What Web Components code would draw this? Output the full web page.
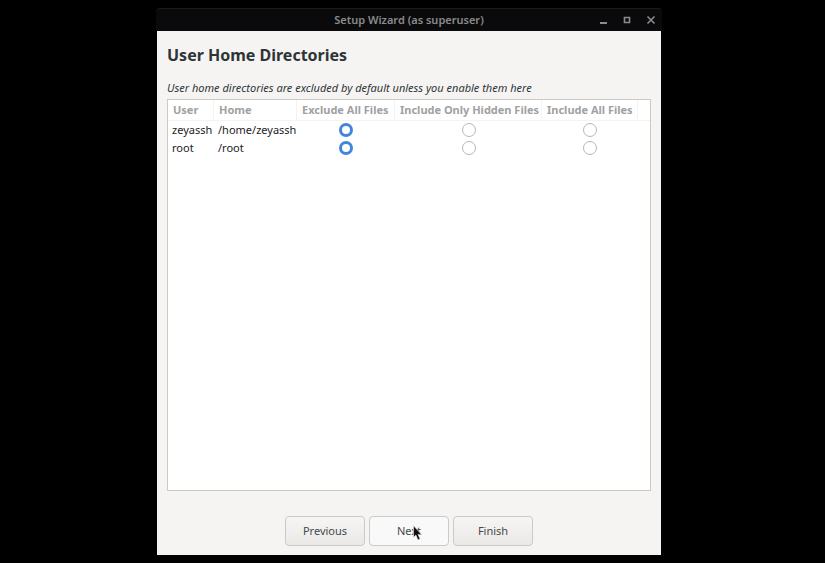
<!DOCTYPE html>
<html lang="en">
  <head>
    <meta charset="UTF-8" />
    <title>Setup Wizard (as superuser)</title>
    <meta name="viewport" content="width=device-width, initial-scale=1.0" />
    <style>
      html {
        height: 100%;
        background: #000;
      }
      body {
        box-sizing: border-box;
        min-height: 100%;
        margin: 0;
        padding: 8px 163px 8px 156px;
        display: flex;
        font-family: "Noto Sans", "Open Sans", sans-serif;
        font-size: 11px;
        line-height: 18px;
        color: #2e3436;
      }
      wizard-window {
        flex: 1;
      }
    </style>
  </head>

  <body>
    <wizard-window caption="Setup Wizard (as superuser)">
      <wizard-page heading="User Home Directories">
        <span slot="hint">User home directories are excluded by default unless you enable them here</span>
        <home-table></home-table>
      </wizard-page>
      <wizard-button slot="actions">Previous</wizard-button>
      <wizard-button slot="actions" hot>Next<mouse-pointer slot="pointer"></mouse-pointer></wizard-button>
      <wizard-button slot="actions">Finish</wizard-button>
    </wizard-window>

    <script>
      class WizardWindow extends HTMLElement {
        constructor() {
          super();

          const root = this.attachShadow({ mode: 'open' });
          root.innerHTML = `
            <style>
              :host {
                display: flex;
                flex-direction: column;
              }
              header {
                display: grid;
                grid-template-columns: 1fr auto 1fr;
                align-items: center;
                height: 22px;
                padding: 0 3px;
                background: #0a0a0c;
                border-top: 1px solid #1b1b1b;
                border-radius: 4px 4px 0 0;
                color: #8b8b8b;
              }
              h1 {
                grid-column: 2;
                margin: 0;
                font-size: 11px;
                font-weight: 600;
              }
              nav {
                display: flex;
                justify-content: flex-end;
                gap: 8px;
              }
              nav button {
                display: flex;
                padding: 0;
                border: 0;
                background: none;
                color: inherit;
              }
              main {
                flex: 1;
                display: flex;
                flex-direction: column;
                margin: 0 1px;
                padding: 12px 10px 9px;
                background: #f5f4f3;
              }
              ::slotted(wizard-page) {
                flex: 1;
              }
              footer {
                display: flex;
                justify-content: center;
                gap: 4px;
                padding-top: 25px;
              }
            </style>
            <header>
              <h1></h1>
              <nav>
                <button type="button" aria-label="Minimize">
                  <svg width="16" height="16"><path d="M5 11h7" stroke="currentColor" stroke-width="2"/></svg>
                </button>
                <button type="button" aria-label="Maximize">
                  <svg width="16" height="16"><path d="M5.5 5.5h5v5h-5z" fill="none" stroke="currentColor" stroke-width="1.6"/></svg>
                </button>
                <button type="button" aria-label="Close">
                  <svg width="16" height="16"><path d="M4.5 4.5l7 7M11.5 4.5l-7 7" stroke="currentColor" stroke-width="1.6"/></svg>
                </button>
              </nav>
            </header>
            <main>
              <slot></slot>
              <footer><slot name="actions"></slot></footer>
            </main>
          `
          root.querySelector('h1').textContent = this.getAttribute('caption');
        }
      }

      window.customElements.define('wizard-window', WizardWindow);

      class WizardPage extends HTMLElement {
        constructor() {
          super();

          const root = this.attachShadow({ mode: 'open' });
          root.innerHTML = `
            <style>
              :host {
                display: flex;
                flex-direction: column;
              }
              h2 {
                margin: 0;
                font-size: 16px;
                line-height: 24px;
              }
              p {
                margin: 12px 0 2px;
                font-style: italic;
              }
              ::slotted(home-table) {
                flex: 1;
              }
            </style>
            <h2></h2>
            <p><slot name="hint"></slot></p>
            <slot></slot>
          `
          root.querySelector('h2').textContent = this.getAttribute('heading');
        }
      }

      window.customElements.define('wizard-page', WizardPage);

      class HomeTable extends HTMLElement {
        constructor() {
          super();

          const users = [
            { name: 'zeyassh', home: '/home/zeyassh' },
            { name: 'root', home: '/root' }
          ];
          const modes = ['Exclude All Files', 'Include Only Hidden Files', 'Include All Files'];

          const getRow = (user) => `
            <tr>
              <td>${user.name}</td>
              <td>${user.home}</td>
              ${modes.map((mode, i) => `
                <td class="mode"><input type="radio" name="mode-${user.name}" aria-label="${user.name}: ${mode}" ${i === 0 ? 'checked' : ''} /></td>
              `).join('')}
              <td></td>
            </tr>
          `

          const root = this.attachShadow({ mode: 'open' });
          root.innerHTML = `
            <style>
              :host {
                display: block;
                border: 1px solid #cdc9c5;
                background: #fff;
                color: #1c1c1c;
              }
              table {
                width: 100%;
                table-layout: fixed;
                border-collapse: separate;
                border-spacing: 0;
                white-space: nowrap;
              }
              .user { width: 46px; }
              .home { width: 83px; }
              .exclude { width: 98px; }
              .hidden { width: 147px; }
              .all { width: 96px; }
              th {
                height: 21px;
                padding: 0 0 0 5px;
                box-sizing: border-box;
                border-right: 1px solid #f3f3f2;
                border-bottom: 1px solid #f3f3f2;
                line-height: 18px;
                text-align: left;
                color: #a0a1a1;
              }
              th:last-child {
                border-right: 0;
              }
              td {
                height: 18px;
                padding: 0 0 0 4px;
              }
              .mode {
                padding: 0;
                text-align: center;
                line-height: 0;
              }
              input {
                appearance: none;
                box-sizing: border-box;
                width: 14px;
                height: 14px;
                margin: 0;
                border: 1px solid #b9b6b2;
                border-radius: 50%;
                background: #fff;
                vertical-align: middle;
              }
              input:checked {
                border: 3px solid #4485dc;
              }
            </style>
            <table>
              <colgroup>
                <col class="user" /><col class="home" /><col class="exclude" /><col class="hidden" /><col class="all" /><col />
              </colgroup>
              <thead>
                <tr>
                  <th>User</th>
                  <th>Home</th>
                  ${modes.map((mode) => `<th>${mode}</th>`).join('')}
                  <th></th>
                </tr>
              </thead>
              <tbody>${users.map(getRow).join('')}</tbody>
            </table>
          `
        }
      }

      window.customElements.define('home-table', HomeTable);

      class WizardButton extends HTMLElement {
        constructor() {
          super();

          const root = this.attachShadow({ mode: 'open' });
          root.innerHTML = `
            <style>
              :host {
                display: block;
                position: relative;
              }
              button {
                display: block;
                min-width: 80px;
                height: 30px;
                padding: 0 12px;
                border: 1px solid #cdc9c5;
                border-radius: 4px;
                background: linear-gradient(#f6f5f4, #ebe9e7);
                font: inherit;
                color: #45494b;
              }
              :host([hot]) button {
                background: #f9f9fa;
              }
              ::slotted(mouse-pointer) {
                position: absolute;
                left: 44px;
                top: 9px;
              }
            </style>
            <button type="button"><slot></slot></button>
            <slot name="pointer"></slot>
          `
        }
      }

      window.customElements.define('wizard-button', WizardButton);

      class MousePointer extends HTMLElement {
        constructor() {
          super();

          const root = this.attachShadow({ mode: 'open' });
          root.innerHTML = `
            <style>
              :host {
                display: block;
                pointer-events: none;
              }
              svg {
                display: block;
              }
            </style>
            <svg width="10" height="16" viewBox="0 0 10 16">
              <path d="M.5.7v11.6l2.4-2.2 2 4.8 2.2-.9-2-4.6h3.5z" fill="#111" stroke="#ddd" stroke-width=".7"/>
            </svg>
          `
        }
      }

      window.customElements.define('mouse-pointer', MousePointer);
    </script>
  </body>
</html>
